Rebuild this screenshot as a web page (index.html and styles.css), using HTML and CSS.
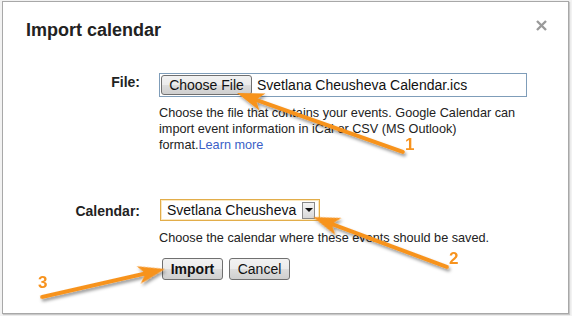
FILE: index.html
```html
<!DOCTYPE html>
<html>
<head>
<meta charset="utf-8">
<link rel="stylesheet" href="styles.css">
</head>
<body>
<div class="dialog">
  <div class="head">
    <h1 class="title">Import calendar</h1>
    <span class="close"><svg width="11" height="11" viewBox="0 0 11 11"><path d="M1 1L10 10M10 1L1 10" stroke="#9a9a9a" stroke-width="2.4" fill="none"/></svg></span>
  </div>
  <div class="form">
    <div class="label file-label">File:</div>
    <div class="field">
      <div class="file-input"><span class="btn choose">Choose File</span><span class="fname">Svetlana Cheusheva Calendar.ics</span></div>
      <p class="help">Choose the file that contains your events. Google Calendar can import event information in iCal or CSV (MS Outlook) format.<a class="link" href="#">Learn more</a></p>
    </div>
    <div class="label cal-label">Calendar:</div>
    <div class="field cal-field">
      <div class="select"><span class="sel-text">Svetlana Cheusheva</span><span class="sel-btn"><span class="tri"></span></span></div>
      <p class="help help2">Choose the calendar where these events should be saved.</p>
    </div>
    <div class="actions">
      <span class="btn action primary">Import</span>
      <span class="btn action">Cancel</span>
    </div>
  </div>
  <svg class="arrows" width="572" height="316" viewBox="0 0 572 316">
    <defs>
      <filter id="sh" x="-20%" y="-20%" width="140%" height="160%">
        <feDropShadow dx="1.5" dy="2.5" stdDeviation="1.8" flood-color="#000" flood-opacity="0.4"/>
      </filter>
    </defs>
    <g fill="#f7931e" stroke="#f7931e" filter="url(#sh)">
      <g transform="translate(237 93) rotate(199.57)">
        <line x1="-176" y1="0" x2="-18" y2="0" stroke-width="4" stroke-linecap="round"/>
        <polygon points="0,0 -27,-9 -20,0 -27,9" stroke="none"/>
      </g>
      <g transform="translate(313 217) rotate(200.46)">
        <line x1="-143" y1="0" x2="-18" y2="0" stroke-width="4" stroke-linecap="round"/>
        <polygon points="0,0 -27,-9 -20,0 -27,9" stroke="none"/>
      </g>
      <g transform="translate(165 269) rotate(-12.82)">
        <line x1="-126" y1="0" x2="-18" y2="0" stroke-width="4" stroke-linecap="round"/>
        <polygon points="0,0 -27,-9 -20,0 -27,9" stroke="none"/>
      </g>
    </g>
    <g class="nums" fill="#f7931e">
      <text x="405" y="150">1</text>
      <text x="449" y="264">2</text>
      <text x="38" y="288">3</text>
    </g>
  </svg>
</div>
</body>
</html>
```
FILE: styles.css
```css
html, body {
  margin: 0;
  padding: 0;
}
body {
  width: 572px;
  height: 316px;
  background: #f2f2f2;
  font-family: "Liberation Sans", Arial, sans-serif;
  color: #222;
  padding: 1px 3px 2px 2px;
  box-sizing: border-box;
}
.dialog {
  position: relative;
  width: 567px;
  height: 313px;
  box-sizing: border-box;
  background: #fff;
  border: 1px solid #a8a8a8;
  box-shadow: 1px 1px 1px #c8c8c8;
}
.head {
  display: flex;
  justify-content: space-between;
  align-items: flex-start;
  padding: 17px 21px 0 23px;
}
.title {
  margin: 0;
  font-size: 18px;
  line-height: 22px;
  font-weight: bold;
  color: #222;
}
.close {
  display: block;
  width: 11px;
  height: 11px;
  margin-top: 1px;
}
.close svg {
  display: block;
}
.form {
  display: grid;
  grid-template-columns: 137px 368px;
  column-gap: 19px;
  margin-top: 32px;
}
.label {
  font-size: 14px;
  font-weight: bold;
  text-align: right;
  color: #222;
}
.file-label {
  line-height: 16px;
  padding-top: 1px;
}
.file-input {
  display: flex;
  align-items: center;
  height: 24px;
  box-sizing: border-box;
  border: 1px solid #7f9db9;
  padding-left: 1px;
}
.btn {
  display: inline-flex;
  align-items: center;
  justify-content: center;
  box-sizing: border-box;
  border: 1px solid #707070;
  border-radius: 3px;
  background: linear-gradient(#f2f2f2, #ebebeb 50%, #dddddd 51%, #cfcfcf);
  font-size: 14px;
  color: #111;
}
.choose {
  height: 20px;
  padding: 0 7px;
  width: 91px;
}
.fname {
  margin-left: 5px;
  font-size: 14px;
  color: #111;
}
.help {
  margin: 8px 0 0;
  font-size: 12.7px;
  line-height: 16px;
  color: #222;
}
.link {
  color: #3b5fc7;
  text-decoration: none;
}
.cal-label {
  margin-top: 46px;
  line-height: 22px;
  padding-top: 1px;
}
.cal-field {
  margin-top: 46px;
}
.select {
  display: flex;
  align-items: center;
  width: 160px;
  height: 22px;
  box-sizing: border-box;
  border: 1px solid #e2ad4a;
  box-shadow: inset 0 0 0 1px #fbe8c0;
  margin-left: 1px;
  padding: 0 4px 0 6px;
}
.sel-text {
  flex: 1;
  font-size: 14px;
  color: #111;
}
.sel-btn {
  display: flex;
  align-items: center;
  justify-content: center;
  width: 13px;
  height: 17px;
  box-sizing: border-box;
  border: 1px solid #8a8a8a;
  background: linear-gradient(#f4f4f4, #d8d8d8);
}
.tri {
  width: 0;
  height: 0;
  border-left: 4px solid transparent;
  border-right: 4px solid transparent;
  border-top: 4px solid #111;
}
.help2 {
  margin-top: 9px;
}
.actions {
  grid-column: 2;
  display: flex;
  gap: 6px;
  margin-top: 12px;
  padding-left: 3px;
}
.action {
  height: 22px;
  width: 61px;
  padding: 0 8px;
}
.primary {
  font-weight: bold;
}
.arrows {
  position: absolute;
  left: -3px;
  top: -2px;
  pointer-events: none;
}
.nums text {
  font-family: "Liberation Sans", Arial, sans-serif;
  font-size: 17px;
  font-weight: bold;
}
```
